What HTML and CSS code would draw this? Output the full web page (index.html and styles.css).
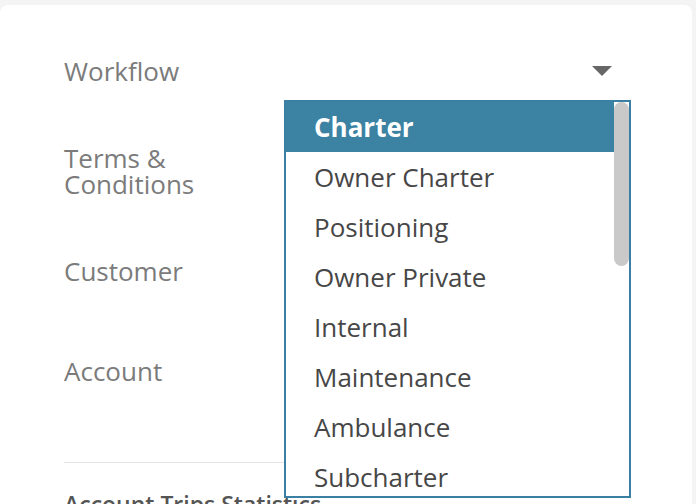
FILE: index.html
```html
<!DOCTYPE html>
<html lang="en">
<head>
<meta charset="utf-8">
<title>Trip details</title>
<link rel="stylesheet" href="styles.css">
</head>
<body>
<div class="card">
  <div class="form-row row-workflow">
    <div class="label">Workflow</div>
    <div class="select">
      <span class="select-value"></span>
      <span class="arrow"></span>
      <div class="dropdown">
        <ul class="options">
          <li class="option selected">Charter</li>
          <li class="option">Owner Charter</li>
          <li class="option">Positioning</li>
          <li class="option">Owner Private</li>
          <li class="option">Internal</li>
          <li class="option">Maintenance</li>
          <li class="option">Ambulance</li>
          <li class="option">Subcharter</li>
          <li class="option">Training</li>
          <li class="option">Ferry</li>
          <li class="option">Demo</li>
          <li class="option">Cargo</li>
          <li class="option">Medevac</li>
          <li class="option">Empty Leg</li>
          <li class="option">Test Flight</li>
          <li class="option">Delivery</li>
          <li class="option">Crew Positioning</li>
          <li class="option">Sightseeing</li>
          <li class="option">Government</li>
        </ul>
        <span class="scroll-thumb"></span>
      </div>
    </div>
  </div>
  <div class="form-row row-terms">
    <div class="label">Terms &amp; Conditions</div>
    <div class="field"></div>
  </div>
  <div class="form-row row-customer">
    <div class="label">Customer</div>
    <div class="field"></div>
  </div>
  <div class="form-row row-account">
    <div class="label">Account</div>
    <div class="field"></div>
  </div>
  <div class="divider"></div>
  <h2 class="section-title">Account Trips Statistics</h2>
</div>
</body>
</html>
```
FILE: styles.css
```css
html, body {
  margin: 0;
  padding: 0;
  background: #f4f4f4;
  font-family: "Open Sans", "Liberation Sans", sans-serif;
  overflow: hidden;
}

.card {
  margin: 5px 4px 0 0;
  background: #ffffff;
  border-radius: 8px;
  padding: 53px 61px 40px 64px;
  height: 600px;
}

.form-row {
  display: grid;
  grid-template-columns: 221px 346px;
  align-items: start;
}

.row-workflow { height: 87px; }
.row-terms { height: 113px; }
.row-customer { height: 100px; }
.row-account { height: 104px; }

.label {
  font-size: 26px;
  line-height: 26px;
  color: #7b7b7b;
  width: 150px;
}

.select {
  position: relative;
  height: 42px;
  display: flex;
  justify-content: flex-end;
  align-items: flex-start;
}

.arrow {
  margin-top: 8px;
  margin-right: 19px;
  width: 0;
  height: 0;
  border-left: 10px solid transparent;
  border-right: 10px solid transparent;
  border-top: 10px solid #666666;
}

.dropdown {
  position: absolute;
  left: -1px;
  top: 100%;
  width: 347px;
  height: 398px;
  box-sizing: border-box;
  border: 2px solid #3b80a2;
  background: #ffffff;
  overflow: hidden;
  z-index: 5;
}

.options {
  margin: 0;
  padding: 0 15px 0 0;
  list-style: none;
}

.scroll-thumb {
  position: absolute;
  top: 0;
  right: 0;
  width: 15px;
  height: 164px;
  border-radius: 8px;
  background: #c9c9c9;
}

.option {
  height: 50px;
  line-height: 50px;
  padding-left: 28px;
  font-size: 26px;
  color: #474747;
  white-space: nowrap;
}

.option.selected {
  background: #3b82a3;
  color: #ffffff;
  font-weight: 700;
}

.divider {
  height: 1px;
  background: #e2e2e2;
}

.section-title {
  margin: 28px 0 0 0;
  font-size: 23px;
  line-height: 26px;
  font-weight: 600;
  color: #555555;
}
```
